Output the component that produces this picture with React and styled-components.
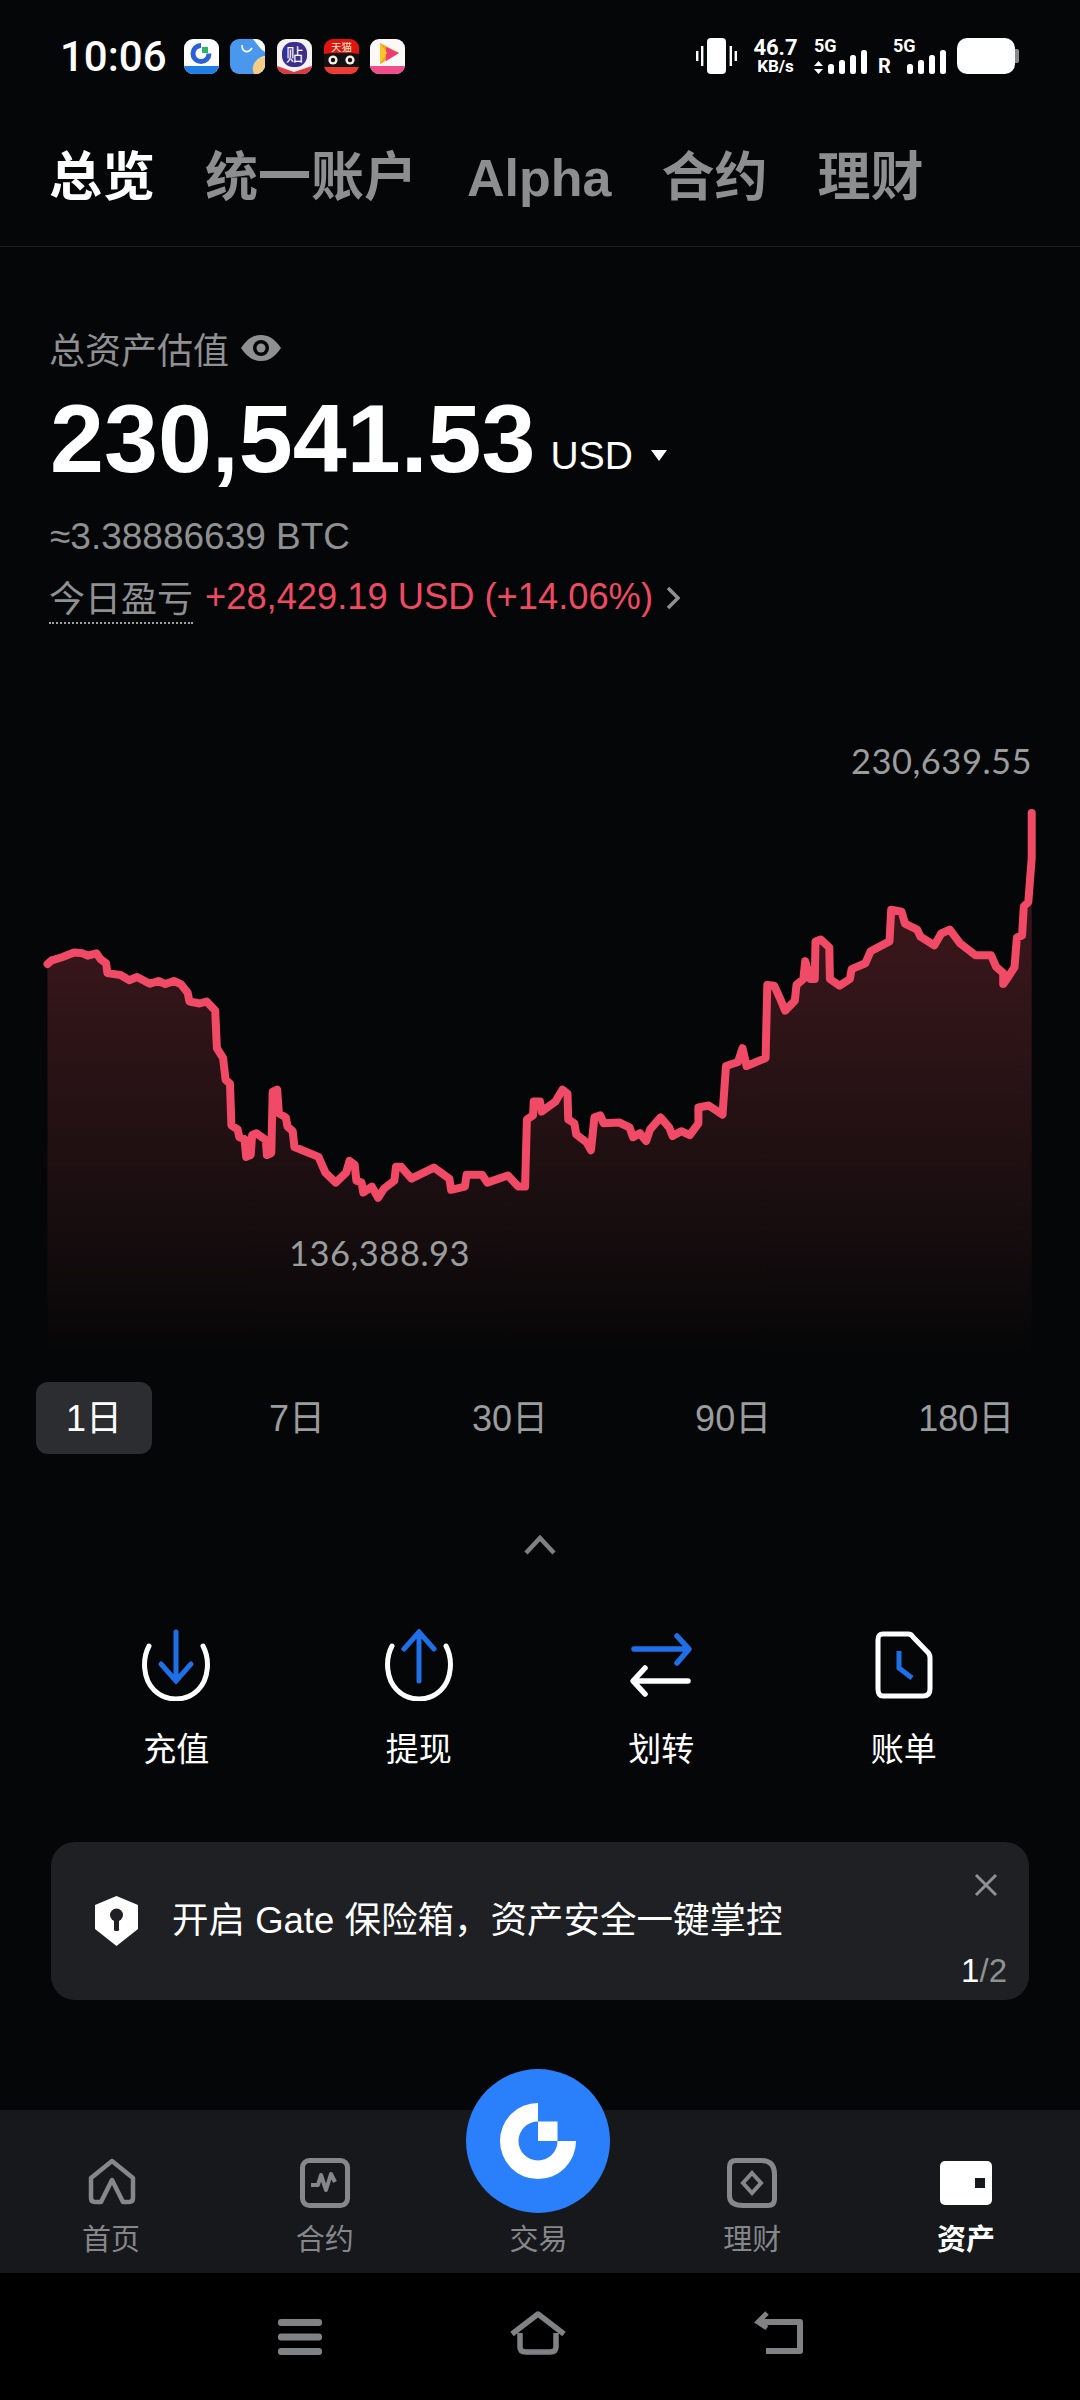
import React from 'react';
import styled, { createGlobalStyle } from 'styled-components';

const GlobalStyle = createGlobalStyle`
  html, body { margin: 0; padding: 0; background: #050607; }
  * { box-sizing: border-box; }
`;

// chart points measured off the reference, left part then right part
const leftPts = [[138,617],[150,608],[180,600],[215,588],[240,590],[255,596],[280,590],[292,605],[308,615],[312,640],[350,645],[375,658],[398,650],[435,667],[460,660],[480,668],[505,660],[525,668],[545,690],[550,712],[580,717],[600,712],[625,735],[630,830],[648,855],[655,910],[668,920],[672,1025],[690,1035],[695,1055],[710,1060],[715,1105],[728,1100],[732,1050],[745,1045],[772,1062],[775,1100],[788,1095],[792,940],[805,935],[810,995],[830,1005],[835,1028],[850,1040],[855,1080],[925,1105],[945,1145],[975,1170],[1005,1145],[1015,1115],[1030,1125],[1035,1165],[1050,1170],[1055,1195],[1080,1180],[1098,1208],[1115,1185],[1145,1165],[1150,1130],[1165,1130],[1195,1160],[1260,1132],[1305,1160],[1310,1188],[1350,1180],[1355,1150],[1400,1150],[1415,1170],[1475,1152],[1505,1180],[1525,1180],[1530,1010],[1548,1000],[1550,965]];
const rightPts = [[0,965],[5,990],[45,965],[65,935],[80,945],[82,1010],[100,1020],[105,1048],[135,1068],[148,1088],[158,1005],[175,1000],[185,1020],[230,1018],[260,1030],[270,1055],[290,1045],[308,1065],[320,1035],[350,1005],[375,1030],[385,1052],[410,1040],[435,1050],[460,1020],[460,980],[490,975],[530,998],[540,875],[575,865],[588,830],[600,875],[655,855],[660,670],[680,672],[695,700],[712,735],[740,710],[745,670],[765,655],[770,610],[785,655],[798,655],[800,560],[815,555],[840,575],[842,655],[870,672],[900,655],[905,630],[945,615],[960,585],[1015,560],[1020,480],[1050,485],[1060,515],[1095,530],[1105,548],[1145,570],[1165,540],[1190,530],[1220,565],[1265,595],[1310,595],[1325,625],[1345,640],[1345,668],[1360,650],[1378,625],[1385,550],[1400,545],[1405,472],[1418,460],[1428,350],[1428,235]];

const toY = (y) => (y / 2.529).toFixed(1);
const linePts = [
  ...leftPts.map(([x, y]) => `${(x / 2.904).toFixed(1)},${toY(y)}`),
  ...rightPts.map(([x, y]) => `${(540 + x / 2.904).toFixed(1)},${toY(y)}`),
].join(' ');

const tabs = ['总览', '统一账户', 'Alpha', '合约', '理财'];
const ranges = ['1日', '7日', '30日', '90日', '180日'];

const AppIcons = () => (
  <>
    <AppIcon>
      <svg viewBox="0 0 35 35" width="35" height="35">
        <rect width="35" height="35" fill="#fff" />
        <path d="M17 4A10.5 10.5 0 1 0 27.5 14.5H22.5A5.5 5.5 0 1 1 17 9Z" fill="#2a62d8" />
        <rect x="18" y="8" width="6" height="6" fill="#2fb56a" />
        <rect y="27" width="35" height="8" fill="#1f7fe6" />
      </svg>
    </AppIcon>
    <AppIcon>
      <svg viewBox="0 0 35 35" width="35" height="35">
        <rect width="35" height="35" fill="#4a97ee" />
        <path d="M23 0H35V35H27C22 28 26 18 35 17V13C30 10 27 5 23 0Z" fill="#f8f8f4" />
        <path d="M24 35C20 27 26 18 35 18V35Z" fill="#f7cd85" />
        <path d="M12 6C12 13 18 15 22 9" fill="none" stroke="#fff" strokeWidth="1.6" />
      </svg>
    </AppIcon>
    <AppIcon>
      <svg viewBox="0 0 35 35" width="35" height="35">
        <rect width="35" height="35" fill="#f6f3f2" />
        <rect x="5" y="3" width="25" height="25" rx="11" fill="#3a2f8f" />
        <text x="17.5" y="22" fontSize="17" textAnchor="middle" fill="#fff" fontFamily="'Noto Sans CJK SC'">贴</text>
        <path d="M0 27L17 33L35 27V35H0Z" fill="#d83a3f" />
      </svg>
    </AppIcon>
    <AppIcon>
      <svg viewBox="0 0 35 35" width="35" height="35">
        <rect width="35" height="35" fill="#e01512" />
        <text x="17.5" y="12" fontSize="10.5" textAnchor="middle" fill="#ffe9c6" fontFamily="'Noto Sans CJK SC'">天猫</text>
        <path d="M0 15L8 14H27L35 15V29H0Z" fill="#111" />
        <circle cx="9" cy="21" r="4.6" fill="#f5efe8" />
        <circle cx="26" cy="21" r="4.6" fill="#f5efe8" />
        <circle cx="9" cy="21" r="2.2" fill="#111" />
        <circle cx="26" cy="21" r="2.2" fill="#111" />
        <rect y="28" width="35" height="7" fill="#ee3b34" />
      </svg>
    </AppIcon>
    <AppIcon>
      <svg viewBox="0 0 35 35" width="35" height="35">
        <rect width="35" height="35" fill="#fbf8f6" />
        <path d="M10 4L29 14L10 25Z" fill="#f5a11f" />
        <path d="M16 8L29 14L16 22Z" fill="#ef3b74" />
        <path d="M10 4L17 14L10 25Z" fill="#f7c62c" />
        <rect y="27" width="35" height="8" fill="#ef4d8c" />
      </svg>
    </AppIcon>
  </>
);

const SignalBars = () => (
  <svg width="40" height="24" viewBox="0 0 40 24" fill="#fff">
    <rect x="0" y="14" width="6" height="10" rx="2.5" />
    <rect x="11" y="10" width="6" height="14" rx="2.5" />
    <rect x="22" y="5" width="6" height="19" rx="2.5" />
    <rect x="33" y="0" width="6" height="24" rx="2.5" />
  </svg>
);

const StatusRight = () => (
  <StatusGroup>
    <svg width="41" height="36" viewBox="0 0 41 36" fill="#fff">
      <rect x="11" y="0" width="19" height="36" rx="4" />
      <rect x="0" y="13" width="2.4" height="10" />
      <rect x="5" y="8" width="2.4" height="20" />
      <rect x="33.6" y="8" width="2.4" height="20" />
      <rect x="38.6" y="13" width="2.4" height="10" />
    </svg>
    <SpeedBox>
      <SpeedValue>46.7</SpeedValue>
      <SpeedUnit>KB/s</SpeedUnit>
    </SpeedBox>
    <SignalGrid $col={14}>
      <NetLabel>5G</NetLabel>
      <SignalMark>
        <svg width="9" height="13" viewBox="0 0 9 13" fill="#fff">
          <path d="M4.5 0L9 5H0Z" />
          <path d="M4.5 13L9 8H0Z" />
        </svg>
      </SignalMark>
      <BarsCell><SignalBars /></BarsCell>
    </SignalGrid>
    <SignalGrid $col={29}>
      <NetLabel $offset={15}>5G</NetLabel>
      <SignalMark>R</SignalMark>
      <BarsCell><SignalBars /></BarsCell>
    </SignalGrid>
    <Battery>
      <BatteryBody />
      <BatteryNub />
    </Battery>
  </StatusGroup>
);

const Chart = () => (
  <ChartBox>
    <svg width="1080" height="660" viewBox="0 0 1080 660" style={{ display: 'block' }}>
      <defs>
        <linearGradient id="chartFill" x1="0" y1="230" x2="0" y2="640" gradientUnits="userSpaceOnUse">
          <stop offset="0" stopColor="#37161a" />
          <stop offset="0.55" stopColor="#1d0f11" />
          <stop offset="1" stopColor="#050607" />
        </linearGradient>
      </defs>
      <polygon points={`47.5,640 ${linePts} 1031.7,640`} fill="url(#chartFill)" />
      <polyline points={linePts} fill="none" stroke="#f04a66" strokeWidth="8" strokeLinejoin="round" strokeLinecap="round" />
    </svg>
    <ChartLabel $top={21} $left={851}>230,639.55</ChartLabel>
    <ChartLabel $top={513} $left={289}>136,388.93</ChartLabel>
  </ChartBox>
);

const DepositArc = () => (
  <path d="M9 17C2 30 3 50 14 61C26 73 46 73 58 61C69 50 70 30 63 17" fill="none" stroke="#fff" strokeWidth="5" strokeLinecap="round" />
);

const actions = [
  {
    label: '充值',
    icon: (
      <>
        <DepositArc />
        <path d="M36 3V50M21 35L36 52L51 35" fill="none" stroke="#1f6fe8" strokeWidth="5" strokeLinecap="round" />
      </>
    ),
  },
  {
    label: '提现',
    icon: (
      <>
        <DepositArc />
        <path d="M36 52V5M21 20L36 3L51 20" fill="none" stroke="#1f6fe8" strokeWidth="5" strokeLinecap="round" />
      </>
    ),
  },
  {
    label: '划转',
    icon: (
      <>
        <path d="M9 20H63M52 7L64 20L52 34" fill="none" stroke="#1f6fe8" strokeWidth="5.5" strokeLinecap="round" strokeLinejoin="round" />
        <path d="M63 52H9M20 39L8 52L20 65" fill="none" stroke="#fff" strokeWidth="5.5" strokeLinecap="round" strokeLinejoin="round" />
      </>
    ),
  },
  {
    label: '账单',
    icon: (
      <>
        <path d="M15 5H40C42.5 5 44 6 45 8L60.5 24C61.5 25.5 62 27 62 29V60C62 64 60 67 55 67H15C11 67 10 64 10 60V11C10 7 11 5 15 5Z" fill="none" stroke="#fff" strokeWidth="5" strokeLinejoin="round" />
        <path d="M31 22V39L44 49" fill="none" stroke="#1f6fe8" strokeWidth="5" />
      </>
    ),
  },
];

const navItems = [
  {
    label: '首页',
    icon: <path d="M15 44H9Q5 44 5 40V20L26 3L47 20V40Q47 44 43 44H37L26 22L15 44Z" fill="none" stroke="#85878a" strokeWidth="4.5" strokeLinejoin="round" />,
  },
  {
    label: '合约',
    icon: (
      <>
        <rect x="2.5" y="2.5" width="45" height="45" rx="7" fill="none" stroke="#85878a" strokeWidth="5" />
        <path d="M11 27L18 27L21 17L26 32L31 16L35 24" fill="none" stroke="#85878a" strokeWidth="4" strokeLinejoin="round" />
      </>
    ),
  },
  { label: '交易', trade: true },
  {
    label: '理财',
    icon: (
      <>
        <path d="M9 2.5H34Q47.5 2.5 47.5 16V41Q47.5 47.5 41 47.5H16Q2.5 47.5 2.5 38V9Q2.5 2.5 9 2.5Z" fill="none" stroke="#85878a" strokeWidth="5" />
        <path d="M25 15L34 25L25 35L16 25Z" fill="none" stroke="#85878a" strokeWidth="4" />
      </>
    ),
  },
  {
    label: '资产',
    active: true,
    icon: (
      <>
        <rect x="-1" y="3" width="52" height="44" rx="5" fill="#fff" />
        <rect x="34" y="20" width="10" height="10" fill="#16181b" />
      </>
    ),
  },
];

const App = () => (
  <>
    <GlobalStyle />
    <Page>
      <StatusBar>
        <StatusLeft>
          <Clock>10:06</Clock>
          <AppIconRow>
            <AppIcons />
          </AppIconRow>
        </StatusLeft>
        <StatusRight />
      </StatusBar>

      <TabBar>
        {tabs.map((t, i) => (
          <Tab key={t} $active={i === 0} $latin={t === 'Alpha'}>{t}</Tab>
        ))}
      </TabBar>

      <Summary>
        <TotalLabel>
          总资产估值
          <svg width="42" height="30" viewBox="0 0 42 30">
            <path d="M1 15C8 5 14 2 21 2C28 2 34 5 41 15C34 25 28 28 21 28C14 28 8 25 1 15Z" fill="#8e9092" />
            <circle cx="21" cy="15" r="8" fill="#050607" />
            <circle cx="21" cy="15" r="4.5" fill="#8e9092" />
          </svg>
        </TotalLabel>
        <AmountRow>
          <Amount>230,541.53</Amount>
          <Currency>USD</Currency>
          <CurrencyCaret>
            <svg width="16" height="11" viewBox="0 0 16 11"><path d="M0 0H16L8 11Z" fill="#fff" /></svg>
          </CurrencyCaret>
        </AmountRow>
        <BtcRow>≈3.38886639 BTC</BtcRow>
        <ProfitRow>
          <ProfitLabel>今日盈亏</ProfitLabel>
          <ProfitValue>+28,429.19 USD (+14.06%)</ProfitValue>
          <ProfitChevron>
            <svg width="14" height="24" viewBox="0 0 14 24"><path d="M2 2L12 12L2 22" fill="none" stroke="#8e9092" strokeWidth="3.5" /></svg>
          </ProfitChevron>
        </ProfitRow>
      </Summary>

      <Chart />

      <RangeRow>
        {ranges.map((r, i) => (
          <RangeItem key={r} $active={i === 0}>{r}</RangeItem>
        ))}
      </RangeRow>

      <CollapseRow>
        <svg width="32" height="20" viewBox="0 0 32 20"><path d="M2 18L16 3L30 18" fill="none" stroke="#7e8082" strokeWidth="4.5" /></svg>
      </CollapseRow>

      <ActionGrid>
        {actions.map((a) => (
          <ActionItem key={a.label}>
            <svg width="72" height="72" viewBox="0 0 72 72">{a.icon}</svg>
            <ActionLabel>{a.label}</ActionLabel>
          </ActionItem>
        ))}
      </ActionGrid>

      <Banner>
        <svg width="43" height="50" viewBox="0 0 43 50">
          <path d="M21.5 0L43 9V33L21.5 50L0 33V9Z" fill="#fff" strokeLinejoin="round" />
          <circle cx="21.5" cy="19" r="6.5" fill="#1e2024" />
          <rect x="19" y="20" width="5" height="15" rx="1.5" fill="#1e2024" />
        </svg>
        <BannerText>开启 Gate 保险箱，资产安全一键掌控</BannerText>
        <BannerClose>
          <svg width="24" height="24" viewBox="0 0 24 24"><path d="M2 2L22 22M22 2L2 22" stroke="#8e9092" strokeWidth="3" /></svg>
        </BannerClose>
        <BannerPager><b>1</b>/2</BannerPager>
      </Banner>

      <BottomNav>
        {navItems.map((n) => (
          <NavItem key={n.label} $active={n.active}>
            {n.trade ? (
              <TradeButton>
                <svg width="78" height="78" viewBox="0 0 80 80" fill="#fff">
                  <path d="M40 1A39 39 0 1 0 79 40H60A20 20 0 1 1 40 20Z" />
                  <rect x="40" y="20" width="20" height="20" />
                </svg>
              </TradeButton>
            ) : null}
            <NavIconBox>
              {n.icon ? <svg width="50" height="50" viewBox="0 0 50 50" style={{ overflow: 'visible' }}>{n.icon}</svg> : null}
            </NavIconBox>
            <NavLabel>{n.label}</NavLabel>
          </NavItem>
        ))}
      </BottomNav>

      <SystemNav>
        <svg width="44" height="36" viewBox="0 0 44 36" fill="#808284">
          <rect width="44" height="7" rx="3" />
          <rect y="14.5" width="44" height="7" rx="3" />
          <rect y="29" width="44" height="7" rx="3" />
        </svg>
        <svg width="58" height="44" viewBox="0 0 58 44" fill="none" stroke="#808284" strokeWidth="5.5" strokeLinejoin="round">
          <path d="M3 23L29 3L55 23" />
          <path d="M11 22V36Q11 41 17 41H41Q47 41 47 36V22" />
        </svg>
        <svg width="50" height="44" viewBox="0 0 50 44" fill="none" stroke="#808284" strokeWidth="6">
          <path d="M6 11H46V40H12" strokeLinejoin="round" />
          <path d="M13 2L4 11L13 17" strokeWidth="5" />
        </svg>
      </SystemNav>
    </Page>
  </>
);

const cjk = `"Liberation Sans", "Noto Sans CJK SC", sans-serif`;

const Page = styled.div`
  width: 1080px;
  height: 2400px;
  display: flex;
  flex-direction: column;
  background: #050607;
  color: #fff;
  font-family: ${cjk};
  overflow: hidden;
`;

const StatusBar = styled.div`
  height: 112px;
  padding: 0 61px 0 60px;
  display: flex;
  align-items: center;
  justify-content: space-between;
`;

const StatusLeft = styled.div`
  display: flex;
  align-items: center;
  gap: 17px;
`;

const Clock = styled.div`
  font-family: Roboto, sans-serif;
  font-weight: 500;
  font-size: 42px;
`;

const AppIconRow = styled.div`
  display: flex;
  gap: 11.7px;
`;

const AppIcon = styled.div`
  width: 35px;
  height: 35px;
  border-radius: 9px;
  overflow: hidden;
  svg { display: block; }
`;

const StatusGroup = styled.div`
  display: flex;
  align-items: center;
  height: 36px;
  gap: 16px;
`;

const SpeedBox = styled.div`
  display: flex;
  flex-direction: column;
  align-items: center;
  width: 45px;
  font-family: Roboto, sans-serif;
  font-weight: 700;
`;

const SpeedValue = styled.div`
  font-size: 22px;
  line-height: 20px;
`;

const SpeedUnit = styled.div`
  font-size: 17px;
  line-height: 17px;
`;

const SignalGrid = styled.div`
  display: grid;
  grid-template-columns: ${(p) => p.$col}px 40px;
  grid-template-rows: 15px 21px;
  margin-left: ${(p) => (p.$col > 20 ? -6 : 0)}px;
`;

const NetLabel = styled.div`
  grid-column: 1 / 3;
  grid-row: 1;
  margin-left: ${(p) => p.$offset || 0}px;
  font-family: Roboto, sans-serif;
  font-weight: 700;
  font-size: 18px;
  line-height: 15px;
`;

const SignalMark = styled.div`
  grid-column: 1;
  grid-row: 2;
  align-self: end;
  font-family: Roboto, sans-serif;
  font-weight: 700;
  font-size: 20px;
  line-height: 15px;
  svg { display: block; }
`;

const BarsCell = styled.div`
  grid-column: 2;
  grid-row: 1 / 3;
  align-self: end;
  height: 24px;
  svg { display: block; }
`;

const Battery = styled.div`
  display: flex;
  align-items: center;
  margin-left: -6px;
`;

const BatteryBody = styled.div`
  width: 58px;
  height: 36px;
  border-radius: 10px;
  background: #fff;
`;

const BatteryNub = styled.div`
  width: 4px;
  height: 14px;
  border-radius: 0 2px 2px 0;
  background: #8a8a8a;
`;

const TabBar = styled.div`
  height: 135px;
  padding: 0 49px 3px;
  display: flex;
  align-items: center;
  gap: 50px;
  border-bottom: 1px solid #1b1d1f;
`;

const Tab = styled.div`
  font-size: ${(p) => (p.$latin ? 52 : 53)}px;
  line-height: 70px;
  font-weight: 700;
  color: ${(p) => (p.$active ? '#fff' : '#8c8e90')};
`;

const Summary = styled.div`
  padding: 81px 49px 0;
  display: flex;
  flex-direction: column;
`;

const TotalLabel = styled.div`
  height: 40px;
  display: flex;
  align-items: center;
  gap: 11px;
  font-size: 36px;
  color: #8e9092;
`;

const AmountRow = styled.div`
  height: 100px;
  margin-top: 21px;
  padding-left: 1px;
  display: flex;
  align-items: center;
`;

const Amount = styled.div`
  font-size: 97px;
  font-weight: 700;
  line-height: 100px;
`;

const Currency = styled.div`
  margin: 33px 18px 0 15px;
  font-size: 39px;
  line-height: 44px;
`;

const CurrencyCaret = styled.div`
  margin-top: 33px;
  svg { display: block; }
`;

const BtcRow = styled.div`
  height: 40px;
  margin-top: 28px;
  padding-left: 1px;
  font-size: 37px;
  line-height: 40px;
  color: #8e9092;
`;

const ProfitRow = styled.div`
  height: 50px;
  margin-top: 19px;
  display: flex;
  align-items: center;
  gap: 10px;
`;

const ProfitLabel = styled.div`
  font-size: 36px;
  line-height: 44px;
  color: #8e9092;
  border-bottom: 2px dotted #a0a2a4;
`;

const ProfitValue = styled.div`
  margin: 0 0 8px 2px;
  font-size: 36.3px;
  color: #ef4a63;
`;

const ProfitChevron = styled.div`
  margin: 0 0 6px 3px;
  svg { display: block; }
`;

const ChartBox = styled.div`
  position: relative;
  height: 660px;
  margin-top: 94px;
`;

const ChartLabel = styled.div`
  position: absolute;
  top: ${(p) => p.$top}px;
  left: ${(p) => p.$left}px;
  font-family: Lato, sans-serif;
  font-size: 34.5px;
  line-height: 40px;
  color: #9a9c9e;
  letter-spacing: 0.5px;
`;

const RangeRow = styled.div`
  height: 72px;
  margin-top: 2px;
  padding-left: 36px;
  display: flex;
  gap: 75px;
`;

const RangeItem = styled.div`
  padding: 0 ${(p) => (p.$active ? 30 : 36)}px;
  margin-right: ${(p) => (p.$active ? 6 : 0)}px;
  border-radius: 12px;
  background: ${(p) => (p.$active ? '#2b2d30' : 'transparent')};
  color: ${(p) => (p.$active ? '#fff' : '#9a9c9e')};
  font-size: 36px;
  line-height: 74px;
`;

const CollapseRow = styled.div`
  height: 20px;
  margin-top: 81px;
  display: flex;
  justify-content: center;
  svg { display: block; }
`;

const ActionGrid = styled.div`
  margin-top: 74px;
  padding: 0 55px;
  display: grid;
  grid-template-columns: repeat(4, 1fr);
`;

const ActionItem = styled.div`
  display: flex;
  flex-direction: column;
  align-items: center;
  gap: 27px;
  svg { display: block; }
`;

const ActionLabel = styled.div`
  font-size: 33px;
  line-height: 44px;
`;

const Banner = styled.div`
  position: relative;
  height: 158px;
  margin: 70px 51px 0;
  padding: 0 0 0 44px;
  display: flex;
  align-items: center;
  gap: 34px;
  background: #1e2024;
  border-radius: 24px;
`;

const BannerText = styled.div`
  margin-bottom: 8px;
  font-size: 36.5px;
`;

const BannerClose = styled.div`
  position: absolute;
  top: 31px;
  right: 31px;
  svg { display: block; }
`;

const BannerPager = styled.div`
  position: absolute;
  right: 22px;
  bottom: 10px;
  font-size: 33px;
  color: #8e9092;
  b { font-weight: 400; color: #fff; }
`;

const BottomNav = styled.div`
  margin-top: auto;
  height: 163px;
  padding: 0 7px 0 4px;
  display: grid;
  grid-template-columns: repeat(5, 1fr);
  background: #16181b;
`;

const NavItem = styled.div`
  position: relative;
  padding-top: 48px;
  display: flex;
  flex-direction: column;
  align-items: center;
  color: ${(p) => (p.$active ? '#fff' : '#85878a')};
  font-weight: ${(p) => (p.$active ? 700 : 400)};
`;

const NavIconBox = styled.div`
  height: 50px;
  svg { display: block; }
`;

const NavLabel = styled.div`
  margin-top: 15px;
  font-size: 29px;
  line-height: 34px;
`;

const TradeButton = styled.div`
  position: absolute;
  top: -41px;
  left: 50%;
  width: 144px;
  height: 144px;
  transform: translateX(-50%);
  display: flex;
  align-items: center;
  justify-content: center;
  border-radius: 50%;
  background: #2a7ffb;
`;

const SystemNav = styled.div`
  height: 127px;
  padding: 0 276px 45px 278px;
  display: flex;
  align-items: flex-end;
  justify-content: space-between;
  background: #000;
  svg { display: block; }
`;

export default App;
